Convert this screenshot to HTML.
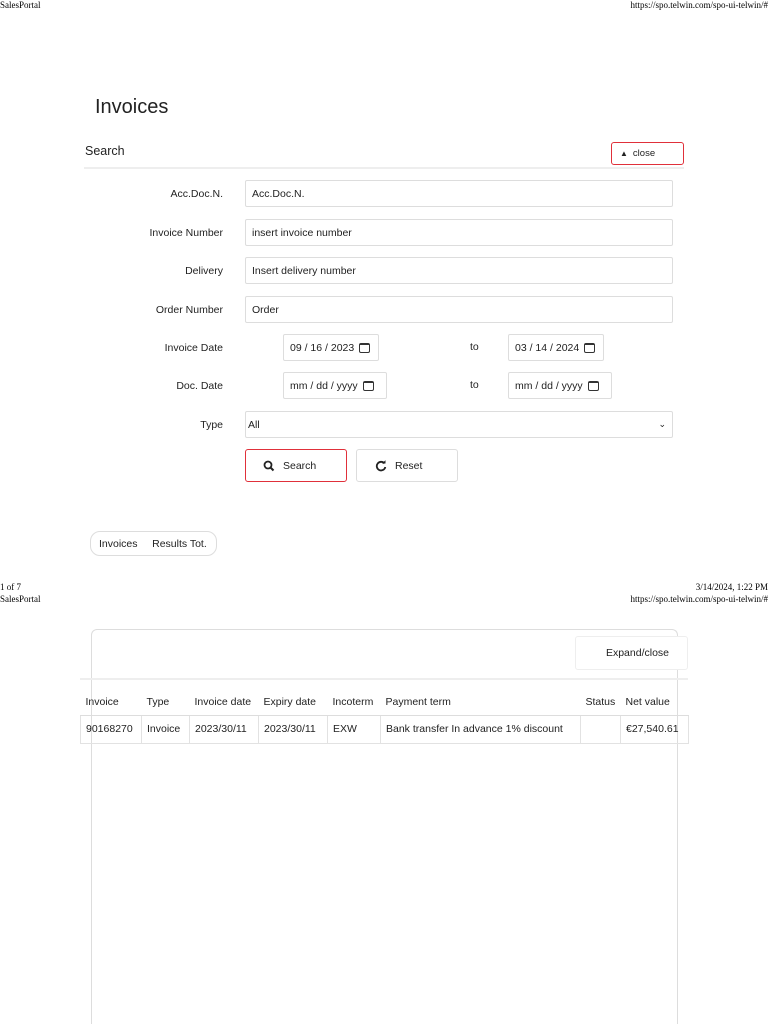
<!DOCTYPE html>
<html><head><meta charset="utf-8"><style>
*{box-sizing:border-box;margin:0;padding:0}
html,body{width:768px;height:1024px;overflow:hidden}
body{position:relative;background:#fff;font-family:"Liberation Sans",sans-serif;font-size:10.5px;color:#222}
.a{position:absolute}
.ser{font-family:"Liberation Serif",serif;font-size:9px;color:#000}
.lbl{position:absolute;right:545px;text-align:right;line-height:14px}
.in{position:absolute;border:1px solid #ddd;border-radius:2px;background:#fff;padding-left:6px;display:flex;align-items:center}
.cal{display:inline-block;width:11px;height:10px;border:1.3px solid #333;border-top-width:2.5px;border-radius:2px;margin-left:5px}
.btn{position:absolute;border:1px solid #ddd;border-radius:3px;display:flex;align-items:center;background:#fff}
table{border-collapse:collapse;position:absolute;left:80px;top:689px}
td{border:1px solid #e2e2e2;padding:0 5px;height:28px;white-space:nowrap}
tr.h td{border-top:none;border-left:none;border-right:none;height:26px;border-bottom:1px solid #ddd}
</style></head><body>
<div class="a ser" style="left:0;top:0">SalesPortal</div>
<div class="a ser" style="right:0;top:0">https://spo.telwin.com/spo-ui-telwin/#</div>

<div class="a" style="left:95px;top:96px;font-size:20px;color:#222">Invoices</div>
<div class="a" style="left:85px;top:144px;font-size:12.5px">Search</div>
<div class="btn" style="left:611px;top:142px;width:73px;height:23px;border-color:#e0303a;padding-left:8px;font-size:9.5px"><span style="font-size:8px;margin-right:5px">&#9650;</span>close</div>
<div class="a" style="left:84px;top:167px;width:600px;height:2px;background:#eee"></div>

<div class="lbl" style="top:187px">Acc.Doc.N.</div>
<div class="in" style="left:245px;top:180px;width:428px;height:27px">Acc.Doc.N.</div>
<div class="lbl" style="top:226px">Invoice Number</div>
<div class="in" style="left:245px;top:219px;width:428px;height:27px">insert invoice number</div>
<div class="lbl" style="top:264px">Delivery</div>
<div class="in" style="left:245px;top:257px;width:428px;height:27px">Insert delivery number</div>
<div class="lbl" style="top:303px">Order Number</div>
<div class="in" style="left:245px;top:296px;width:428px;height:27px">Order</div>
<div class="lbl" style="top:341px">Invoice Date</div>
<div class="in" style="left:283px;top:334px;width:96px;height:27px">09 / 16 / 2023<span class="cal"></span></div>
<div class="a" style="left:470px;top:341px">to</div>
<div class="in" style="left:508px;top:334px;width:96px;height:27px">03 / 14 / 2024<span class="cal"></span></div>
<div class="lbl" style="top:379px">Doc. Date</div>
<div class="in" style="left:283px;top:372px;width:104px;height:27px">mm / dd / yyyy<span class="cal"></span></div>
<div class="a" style="left:470px;top:379px">to</div>
<div class="in" style="left:508px;top:372px;width:104px;height:27px">mm / dd / yyyy<span class="cal"></span></div>
<div class="lbl" style="top:418px">Type</div>
<div class="in" style="left:245px;top:411px;width:428px;height:27px;padding-left:2px">All<span style="margin-left:auto;margin-right:6px;font-size:9px">&#8964;</span></div>

<div class="btn" style="left:245px;top:449px;width:102px;height:33px;border-color:#e0303a;padding-left:17px">
<svg width="12" height="12" viewBox="0 0 12 12"><circle cx="5" cy="5" r="3.5" fill="none" stroke="#222" stroke-width="1.8"/><path d="M7.5 7.5L10.5 10.5" stroke="#222" stroke-width="2"/></svg><span style="margin-left:8px">Search</span></div>
<div class="btn" style="left:356px;top:449px;width:102px;height:33px;padding-left:18px">
<svg width="12" height="12" viewBox="0 0 12 12"><path d="M9.5 3.5A4.3 4.3 0 1 0 10.3 7" fill="none" stroke="#222" stroke-width="1.8"/><path d="M7 3.5L10.5 3.5L10.5 0.2Z" fill="#222"/></svg><span style="margin-left:8px">Reset</span></div>

<div class="a" style="left:90px;top:531px;width:127px;height:25px;border:1px solid #ddd;border-radius:10px;padding:6px 0 0 8px;white-space:nowrap">Invoices &nbsp;&nbsp;&nbsp; Results Tot.</div>

<div class="a ser" style="left:0;top:582px">1 of 7</div>
<div class="a ser" style="right:0;top:582px">3/14/2024, 1:22 PM</div>
<div class="a ser" style="left:0;top:594px">SalesPortal</div>
<div class="a ser" style="right:0;top:594px">https://spo.telwin.com/spo-ui-telwin/#</div>

<div class="a" style="left:91px;top:629px;width:587px;height:395px;border:1px solid #ddd;border-bottom:none;border-radius:6px 6px 0 0"></div>
<div class="btn" style="left:575px;top:636px;width:113px;height:34px;justify-content:flex-end;padding-right:18px;border-color:#eee">Expand/close</div>
<div class="a" style="left:80px;top:678px;width:608px;height:2px;background:#eee"></div>
<table>
<tr class="h"><td style="width:61px">Invoice</td><td style="width:48px">Type</td><td style="width:69px">Invoice date</td><td style="width:69px">Expiry date</td><td style="width:53px">Incoterm</td><td style="width:200px">Payment term</td><td style="width:40px">Status</td><td style="width:68px">Net value</td></tr>
<tr><td>90168270</td><td>Invoice</td><td>2023/30/11</td><td>2023/30/11</td><td>EXW</td><td>Bank transfer In advance 1% discount</td><td></td><td>€27,540.61</td></tr>
</table>
</body></html>
